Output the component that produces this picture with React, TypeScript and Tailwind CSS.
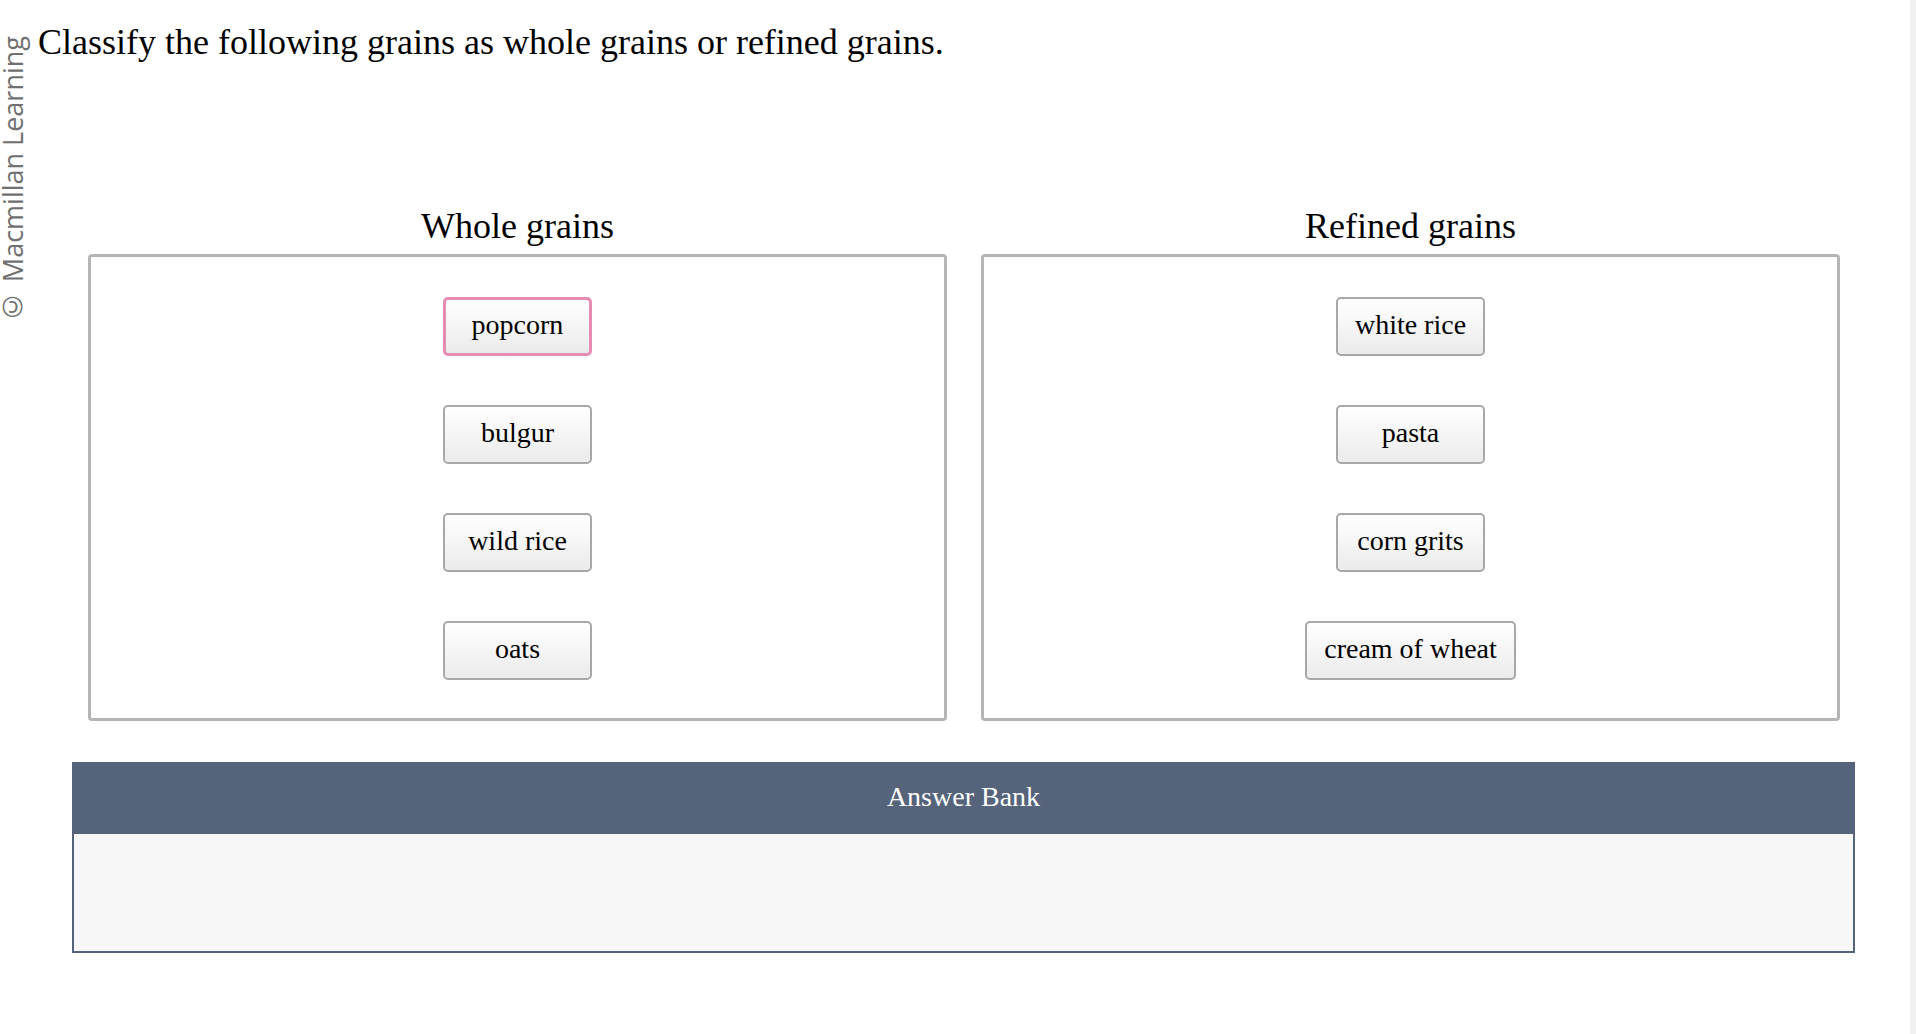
const whole = ["popcorn", "bulgur", "wild rice", "oats"];
const refined = ["white rice", "pasta", "corn grits", "cream of wheat"];

const Chip = ({ label, focused }: { label: string; focused?: boolean }) => (
  <div
    className={
      "h-[59px] min-w-[149px] px-[17px] pb-[4px] flex items-center justify-center rounded-[5px] bg-gradient-to-b from-white to-[#ebebeb] text-[28px] text-black " +
      (focused ? "border-[3px] border-[#e68bb3]" : "border-2 border-[#a8a8a8]")
    }
  >
    {label}
  </div>
);

const Bin = ({ title, items, focusFirst }: { title: string; items: string[]; focusFirst?: boolean }) => (
  <div className="flex-1 flex flex-col">
    <h2 className="text-center text-[36px] leading-[41px] mb-[7px]">{title}</h2>
    <div className="h-[467px] rounded-[4px] border-[3px] border-[#b5b5b5] pt-[40px] flex flex-col items-center gap-[49px]">
      {items.map((item, i) => (
        <Chip key={item} label={item} focused={focusFirst && i === 0} />
      ))}
    </div>
  </div>
);

export default function App() {
  return (
    <div className="flex min-h-screen bg-white text-black font-['Liberation_Serif','Times_New_Roman',serif]">
      {/* copyright watermark */}
      <div className="w-[24px] shrink-0">
        <div className="mt-[36px] [writing-mode:vertical-rl] rotate-180 text-[27px] leading-[25px] text-[#707070] font-['Open_Sans',sans-serif] whitespace-nowrap">
          © Macmillan Learning
        </div>
      </div>

      <div className="flex-1 pl-[14px]">
        <h1 className="mt-[22px] text-[36px] leading-[41px]">
          Classify the following grains as whole grains or refined grains.
        </h1>

        <div className="mt-[143px] ml-[50px] w-[1752px] flex gap-[34px]">
          <Bin title="Whole grains" items={whole} focusFirst />
          <Bin title="Refined grains" items={refined} />
        </div>

        <div className="mt-[41px] ml-[34px] w-[1783px]">
          <div className="h-[72px] bg-[#55647a] flex items-center justify-center pb-[2px] text-white text-[28px]">
            Answer Bank
          </div>
          <div className="h-[119px] bg-[#f7f7f7] border-2 border-t-0 border-[#55647a]" />
        </div>
      </div>

      {/* scrollbar track */}
      <div className="w-[6px] shrink-0 bg-[#f1f1f1]" />
    </div>
  );
}
